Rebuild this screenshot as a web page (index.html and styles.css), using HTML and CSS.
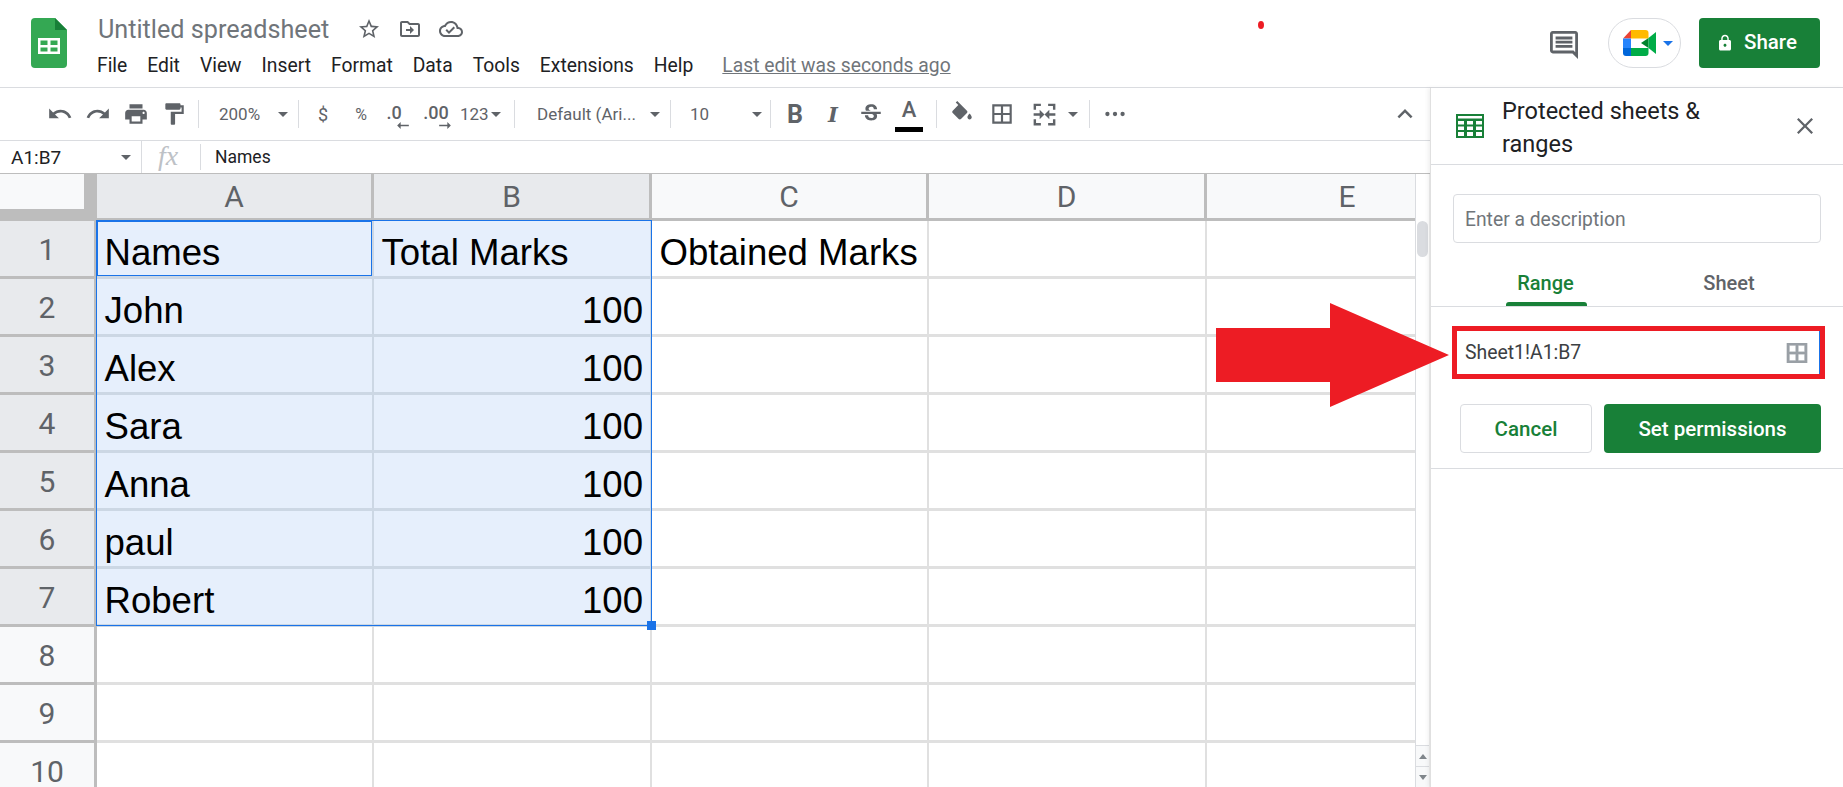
FILE: index.html
```html
<!DOCTYPE html>
<html lang="en">
<head>
    <meta charset="UTF-8">
    <meta name="viewport" content="width=device-width, initial-scale=1.0">
    <link rel="stylesheet" href="styles.css">
    <title>Untitled spreadsheet</title>
</head>
<body>

    <div class="topbar">
        <svg class="logo" viewBox="0 0 36 50">
            <path fill="#34a853" d="M4 0H24L36 12V46a4 4 0 0 1-4 4H4a4 4 0 0 1-4-4V4a4 4 0 0 1 4-4z"/>
            <path fill="#188038" d="M24 0L36 12H24z"/>
            <path fill="#fff" d="M7 20H29V36H7zM9.500 22.500V27H16.500V22.500zM19.500 22.500V27H26.500V22.500zM9.500 29.500V33.500H16.500V29.500zM19.500 29.500V33.500H26.500V29.500z" fill-rule="evenodd"/>
        </svg>

        <div class="doc-info">
            <div class="title-row">
                <span class="doc-title">Untitled spreadsheet</span>
                <svg class="title-icon" viewBox="0 0 24 24"><path d="M22 9.240l-7.190-.62L12 2 9.190 8.630 2 9.240l5.460 4.730L5.820 21 12 17.270 18.180 21l-1.630-7.030L22 9.240zM12 15.400l-3.760 2.270 1-4.280-3.320-2.880 4.380-.38L12 6.100l1.710 4.040 4.380.38-3.320 2.880 1 4.280L12 15.400z"/></svg>
                <svg class="title-icon" viewBox="0 0 24 24"><path d="M20 6h-8l-2-2H4c-1.100 0-1.990.9-1.990 2L2 18c0 1.100.9 2 2 2h16c1.100 0 2-.9 2-2V8c0-1.100-.9-2-2-2zm0 12H4V6h5.170l2 2H20v10zm-8-4H8v-2h4V9l4 4-4 4v-3z"/></svg>
                <svg class="title-icon" viewBox="0 0 24 24"><path d="M19.350 10.040C18.670 6.590 15.640 4 12 4 9.110 4 6.600 5.640 5.350 8.040 2.340 8.360 0 10.910 0 14c0 3.310 2.690 6 6 6h13c2.760 0 5-2.240 5-5 0-2.640-2.050-4.780-4.650-4.960zM19 18H6c-2.210 0-4-1.790-4-4 0-2.050 1.530-3.760 3.560-3.970l1.070-.11.5-.95C8.080 7.140 9.940 6 12 6c2.620 0 4.880 1.860 5.390 4.430l.3 1.500 1.530.11c1.560.1 2.780 1.410 2.780 2.960 0 1.650-1.350 3-3 3zm-9-3.820l-2.090-2.090L6.500 13.500 10 17l6.010-6.010-1.410-1.410z"/></svg>
            </div>
            <div class="menu-row">
                <span class="menu-item">File</span>
                <span class="menu-item">Edit</span>
                <span class="menu-item">View</span>
                <span class="menu-item">Insert</span>
                <span class="menu-item">Format</span>
                <span class="menu-item">Data</span>
                <span class="menu-item">Tools</span>
                <span class="menu-item">Extensions</span>
                <span class="menu-item">Help</span>
                <span class="last-edit">Last edit was seconds ago</span>
            </div>
        </div>

        <div class="top-actions">
            <svg class="comment-icon" viewBox="2 2 20 20"><path d="M21.990 4c0-1.100-.89-2-1.990-2H4c-1.100 0-2 .9-2 2v12c0 1.100.9 2 2 2h14l4 4-.01-18zM20 4v13.170L18.830 16H4V4h16zM6 12h12v2H6zm0-3h12v2H6zm0-3h12v2H6z"/></svg>
            <div class="meet-btn">
                <svg class="meet-icon" viewBox="0 0 33 26">
                    <path fill="#ea4335" d="M8 0V8.500H0z"/>
                    <path fill="#ffba00" d="M8 0H22.500a3 3 0 0 1 3 3V8.500H8z"/>
                    <path fill="#2684fc" d="M0 8.500H8V18H0z"/>
                    <path fill="#0066da" d="M0 18H8V26H3a3 3 0 0 1-3-3z"/>
                    <path fill="#00ac47" d="M8 18H25.500V23a3 3 0 0 1-3 3H8z"/>
                    <path fill="#00832d" d="M25.500 8L18 13l7.500 5z"/>
                    <path fill="#00ac47" d="M25.500 8L33 2V24L25.500 18z"/>
                </svg>
                <span class="meet-caret"></span>
            </div>
            <div class="share-btn">
                <svg class="lock-icon" viewBox="0 0 24 24"><path d="M18 8h-1V6c0-2.760-2.240-5-5-5S7 3.240 7 6v2H6c-1.100 0-2 .9-2 2v10c0 1.100.9 2 2 2h12c1.100 0 2-.9 2-2V10c0-1.100-.9-2-2-2zm-6 9c-1.100 0-2-.9-2-2s.9-2 2-2 2 .9 2 2-.9 2-2 2zm3.100-9H8.900V6c0-1.710 1.390-3.100 3.100-3.100 1.710 0 3.100 1.390 3.100 3.100v2z"/></svg>
                <span>Share</span>
            </div>
        </div>
        <span class="red-dot"></span>
    </div>

    <div class="workspace">
        <div class="sheet-area">

            <div class="toolbar">
                <span class="tool first"><svg viewBox="0 0 24 24"><path d="M12.500 8c-2.650 0-5.050.99-6.900 2.600L2 7v9h9l-3.620-3.620c1.390-1.160 3.160-1.880 5.120-1.880 3.540 0 6.550 2.310 7.600 5.500l2.370-.78C21.080 11.030 17.150 8 12.500 8z"/></svg></span>
                <span class="tool"><svg viewBox="0 0 24 24"><path d="M18.400 10.600C16.550 8.990 14.150 8 11.500 8c-4.650 0-8.580 3.030-9.960 7.220L3.900 16c1.050-3.190 4.050-5.500 7.600-5.500 1.950 0 3.730.72 5.120 1.880L13 16h9V7l-3.600 3.600z"/></svg></span>
                <span class="tool"><svg viewBox="0 0 24 24"><path d="M19 8H5c-1.660 0-3 1.340-3 3v6h4v4h12v-4h4v-6c0-1.660-1.340-3-3-3zm-3 11H8v-5h8v5zm3-7c-.55 0-1-.45-1-1s.45-1 1-1 1 .45 1 1-.45 1-1 1zm-1-9H6v4h12V3z"/></svg></span>
                <span class="tool"><svg viewBox="0 0 24 24"><path d="M18 4V3c0-.55-.45-1-1-1H5c-.55 0-1 .45-1 1v4c0 .55.45 1 1 1h12c.55 0 1-.45 1-1V6h1v4H9v11c0 .55.45 1 1 1h2c.55 0 1-.45 1-1v-9h8V4h-3z"/></svg></span>
                <span class="tool-sep sep-first"></span>

                <span class="select zoom-select">200%<i class="caret"></i></span>
                <span class="tool-sep"></span>

                <span class="tool-text w48">$</span>
                <span class="tool-text w28 small">%</span>
                <span class="tool-text w38 decimal">.0<svg class="dec-arrow" viewBox="0 0 10 6"><path d="M10 2.300H3V0L0 3l3 3V3.700h7z"/></svg></span>
                <span class="tool-text w46 decimal">.00<svg class="dec-arrow" viewBox="0 0 10 6"><path d="M0 2.300H7V0l3 3-3 3V3.700H0z"/></svg></span>
                <span class="select num-select">123<i class="caret"></i></span>
                <span class="tool-sep"></span>

                <span class="select font-select">Default (Ari...<i class="caret"></i></span>
                <span class="tool-sep"></span>

                <span class="select size-select">10<i class="caret"></i></span>
                <span class="tool-sep"></span>

                <span class="tool-text w48 fmt-b">B</span>
                <span class="tool-text w28 fmt-i">I</span>
                <span class="tool w48"><svg viewBox="0 0 24 24"><path d="M6.850 7.080C6.850 4.370 9.450 3 12.240 3c1.640 0 3 .49 3.900 1.280.77.65 1.460 1.730 1.460 3.240h-3.010c0-.31-.05-.59-.15-.85-.29-.86-1.200-1.280-2.250-1.280-1.860 0-2.340 1.020-2.340 1.700 0 .48.25.88.74 1.210.38.25.77.48 1.410.7H7.390c-.21-.34-.54-.89-.54-1.920zM21 12v-2H3v2h9.620c1.150.45 1.960.75 1.960 1.970 0 1-.81 1.670-2.280 1.670-1.540 0-2.930-.54-2.930-2.510H6.400c0 .55.08 1.130.24 1.580.81 2.290 3.290 3.300 5.670 3.300 2.270 0 5.300-.89 5.300-4.050 0-.3-.01-1.160-.48-1.940H21V12z"/></svg></span>
                <span class="text-color">A<i class="color-bar"></i></span>
                <span class="tool-sep sep-color"></span>

                <span class="tool fill-tool"><svg viewBox="0 0 24 24"><path d="M16.560 8.940L7.620 0 6.210 1.410l2.380 2.380-5.150 5.150c-.59.59-.59 1.540 0 2.120l5.500 5.500c.29.29.68.44 1.060.44s.77-.15 1.060-.44l5.500-5.500c.59-.58.59-1.530 0-2.120zM19 11.500s-2 2.170-2 3.500c0 1.100.9 2 2 2s2-.9 2-2c0-1.330-2-3.500-2-3.500z"/></svg></span>
                <span class="tool w42"><svg viewBox="0 0 24 24"><path d="M3 3v18h18V3H3zm8 16H5v-6h6v6zm0-8H5V5h6v6zm8 8h-6v-6h6v6zm0-8h-6V5h6v6z"/></svg></span>
                <span class="tool w42 merge-tool"><svg viewBox="0 0 24 24"><path d="M3 3h6v2H5v3H3zM15 3h6v5h-2V5h-4zM3 16h2v3h4v2H3zM19 16h2v5h-6v-2h4zM3 11h5V8l4 4-4 4v-3H3zM21 11h-5V8l-4 4 4 4v-3h5z"/></svg></span>
                <i class="caret merge-caret"></i>
                <span class="tool-sep sep-merge"></span>
                <span class="tool w50"><svg viewBox="0 0 24 24"><circle cx="5" cy="12" r="2"/><circle cx="12" cy="12" r="2"/><circle cx="19" cy="12" r="2"/></svg></span>
                <svg class="collapse-icon" viewBox="0 0 24 24"><path d="M12 8l-6 6 1.410 1.410L12 10.830l4.590 4.580L18 14z"/></svg>
            </div>

            <div class="formula-bar">
                <span class="name-box">A1:B7<i class="caret"></i></span>
                <span class="fx">fx</span>
                <span class="formula-text">Names</span>
            </div>

            <div class="grid-wrap">
                <div class="grid">
                    <div class="corner"></div>
                    <div class="col-head picked">A</div>
                    <div class="col-head picked">B</div>
                    <div class="col-head">C</div>
                    <div class="col-head">D</div>
                    <div class="col-head last">E</div>

                    <div class="row-head picked">1</div>
                    <div class="cell sel active">Names</div>
                    <div class="cell sel">Total Marks</div>
                    <div class="cell">Obtained Marks</div>
                    <div class="cell"></div>
                    <div class="cell last"></div>

                    <div class="row-head picked">2</div>
                    <div class="cell sel">John</div>
                    <div class="cell sel num">100</div>
                    <div class="cell"></div>
                    <div class="cell"></div>
                    <div class="cell last"></div>

                    <div class="row-head picked">3</div>
                    <div class="cell sel">Alex</div>
                    <div class="cell sel num">100</div>
                    <div class="cell"></div>
                    <div class="cell"></div>
                    <div class="cell last"></div>

                    <div class="row-head picked">4</div>
                    <div class="cell sel">Sara</div>
                    <div class="cell sel num">100</div>
                    <div class="cell"></div>
                    <div class="cell"></div>
                    <div class="cell last"></div>

                    <div class="row-head picked">5</div>
                    <div class="cell sel">Anna</div>
                    <div class="cell sel num">100</div>
                    <div class="cell"></div>
                    <div class="cell"></div>
                    <div class="cell last"></div>

                    <div class="row-head picked">6</div>
                    <div class="cell sel">paul</div>
                    <div class="cell sel num">100</div>
                    <div class="cell"></div>
                    <div class="cell"></div>
                    <div class="cell last"></div>

                    <div class="row-head picked">7</div>
                    <div class="cell sel">Robert</div>
                    <div class="cell sel num">100</div>
                    <div class="cell"></div>
                    <div class="cell"></div>
                    <div class="cell last"></div>

                    <div class="row-head">8</div>
                    <div class="cell"></div>
                    <div class="cell"></div>
                    <div class="cell"></div>
                    <div class="cell"></div>
                    <div class="cell last"></div>

                    <div class="row-head">9</div>
                    <div class="cell"></div>
                    <div class="cell"></div>
                    <div class="cell"></div>
                    <div class="cell"></div>
                    <div class="cell last"></div>

                    <div class="row-head">10</div>
                    <div class="cell"></div>
                    <div class="cell"></div>
                    <div class="cell"></div>
                    <div class="cell"></div>
                    <div class="cell last"></div>
                </div>

                <!-- selection frame over the cells -->
                <div class="selection"><span class="sel-handle"></span></div>

                <div class="v-scroll">
                    <div class="thumb"></div>
                    <div class="scroll-arrows">
                        <span class="arrow-btn"><i class="arrow-up"></i></span>
                        <span class="arrow-btn"><i class="arrow-down"></i></span>
                    </div>
                </div>
            </div>
        </div>

        <div class="side-panel">
            <div class="panel-head">
                <svg class="panel-icon" viewBox="0 0 28 24">
                    <path fill="#188038" fill-rule="evenodd" d="M0 0H28V24H0zM2 7V10.500H8V7zM11 7V10.500H17V7zM20 7V10.500H26V7zM2 12.500V16H8V12.500zM11 12.500V16H17V12.500zM20 12.500V16H26V12.500zM2 18V22H8V18zM11 18V22H17V18zM20 18V22H26V18zM2 2V4.500H26V2z"/>
                </svg>
                <div class="panel-title">Protected sheets &amp; ranges</div>
                <svg class="close-icon" viewBox="5 5 14 14"><path d="M19 6.410L17.590 5 12 10.590 6.410 5 5 6.410 10.590 12 5 17.590 6.410 19 12 13.410 17.590 19 19 17.590 13.410 12z"/></svg>
            </div>

            <div class="desc-wrap">
                <div class="desc-input">Enter a description</div>
            </div>

            <div class="tabs">
                <div class="tab on">Range<i class="tab-line"></i></div>
                <div class="tab off">Sheet</div>
            </div>

            <div class="range-wrap">
                <div class="range-box">
                    <span class="range-text">Sheet1!A1:B7</span>
                    <svg class="range-icon" viewBox="3 3 18 18"><path d="M3 3v18h18V3H3zm8 16H5v-6h6v6zm0-8H5V5h6v6zm8 8h-6v-6h6v6zm0-8h-6V5h6v6z"/></svg>
                </div>
            </div>

            <div class="panel-buttons">
                <div class="btn-cancel">Cancel</div>
                <div class="btn-set">Set permissions</div>
            </div>
        </div>
    </div>

    <!-- red annotation arrow pasted on top of the screenshot -->
    <svg class="big-arrow" viewBox="0 0 233 104">
        <path fill="#ed1c24" d="M0 25H114V0L233 52L114 104V79H0z"/>
    </svg>

</body>
</html>
```

FILE: styles.css
```css
* {
    box-sizing: border-box;
}

html, body {
    margin: 0;
    padding: 0;
    height: 787px;
    overflow: hidden;
}

body {
    position: relative;
    font-family: 'Roboto', sans-serif;
    background-color: #fff;
    color: #202124;
}

i {
    font-style: normal;
}

/* top bar */
.topbar {
    height: 88px;
    border-bottom: 1px solid #dadce0;
    display: flex;
    align-items: flex-start;
    padding-left: 31px;
}

.logo {
    width: 36px;
    height: 50px;
    margin-top: 18px;
    flex: none;
}

.doc-info {
    margin-left: 31px;
}

.title-row {
    display: flex;
    align-items: center;
    height: 30px;
    margin-top: 14px;
}

.doc-title {
    font-size: 25.200px;
    color: #70757a;
    width: 259px;
    white-space: nowrap;
}

.title-icon {
    width: 24px;
    height: 24px;
    fill: #5f6368;
    margin-right: 17px;
}

.menu-row {
    display: flex;
    align-items: center;
    height: 26px;
    margin-top: 8px;
    margin-left: -1px;
    font-size: 19.300px;
}

.menu-item {
    margin-right: 20px;
    color: #202124;
}

.last-edit {
    margin-left: 9px;
    color: #70757a;
    text-decoration: underline;
}

.top-actions {
    margin-left: auto;
    margin-right: 23px;
    margin-top: 18px;
    display: flex;
    align-items: center;
    height: 50px;
}

.comment-icon {
    width: 28px;
    height: 28px;
    fill: #5f6368;
    margin-right: 30px;
    margin-top: 4px;
}

.meet-btn {
    width: 73px;
    height: 50px;
    border: 1px solid #dadce0;
    border-radius: 25px;
    display: flex;
    align-items: center;
    padding-left: 14px;
    margin-right: 18px;
}

.meet-icon {
    width: 33px;
    height: 26px;
}

.meet-caret {
    margin-left: 7px;
    border-left: 5px solid transparent;
    border-right: 5px solid transparent;
    border-top: 5px solid #1a73e8;
}

.share-btn {
    width: 121px;
    height: 50px;
    background-color: #188038;
    border-radius: 4px;
    color: #fff;
    font-size: 20.500px;
    font-weight: 500;
    display: flex;
    align-items: center;
    padding-left: 17px;
    padding-bottom: 2px;
}

.lock-icon {
    width: 18px;
    height: 18px;
    fill: #fff;
    margin-right: 10px;
    margin-top: 2px;
}

.red-dot {
    position: absolute;
    left: 1258px;
    top: 21px;
    width: 6px;
    height: 8px;
    border-radius: 50%;
    background-color: #ed1c24;
}

/* main part */
.workspace {
    display: flex;
    height: 699px;
}

.sheet-area {
    width: 1430px;
    flex: none;
}

.toolbar {
    height: 53px;
    border-bottom: 1px solid #dadce0;
    display: flex;
    align-items: center;
}

.tool {
    width: 38px;
    height: 38px;
    display: flex;
    align-items: center;
    justify-content: center;
    flex: none;
}

.tool svg {
    width: 26px;
    height: 26px;
    fill: #5f6368;
}

.tool.first {
    margin-left: 41px;
}

.tool.w48 {
    width: 48px;
}

.tool.w42 {
    width: 42px;
}

.tool.w50 {
    width: 50px;
}

.merge-tool svg {
    width: 29px;
    height: 29px;
}

.tool-sep {
    width: 1px;
    height: 28px;
    background-color: #dadce0;
    flex: none;
}

.sep-first {
    margin-left: 5px;
}

.sep-color {
    margin-left: 13px;
}

.sep-merge {
    margin-left: 11px;
}

.tool-text {
    font-size: 18px;
    color: #5f6368;
    text-align: center;
    flex: none;
    position: relative;
}

.w28 {
    width: 28px;
}

.w38 {
    width: 38px;
}

.w46 {
    width: 46px;
}

.w48 {
    width: 48px;
}

.small {
    font-size: 16px;
}

.decimal {
    font-size: 18px;
    font-weight: 500;
    margin-top: -3px;
}

.dec-arrow {
    position: absolute;
    left: 50%;
    margin-left: 3px;
    top: 20px;
    width: 12px;
    height: 7px;
    fill: #5f6368;
}

.fmt-b {
    font-size: 25px;
    font-weight: 700;
}

.fmt-i {
    font-family: 'DejaVu Serif', serif;
    font-size: 21px;
    font-weight: 700;
    font-style: italic;
}

.text-color {
    width: 28px;
    height: 38px;
    flex: none;
    font-size: 22px;
    font-weight: 500;
    color: #5f6368;
    text-align: center;
    line-height: 30px;
    position: relative;
}

.color-bar {
    position: absolute;
    left: 0;
    bottom: 1px;
    width: 28px;
    height: 5px;
    background-color: #000;
}

.fill-tool {
    margin-left: 6px;
}

.select {
    font-size: 17px;
    color: #5f6368;
    display: flex;
    align-items: center;
    flex: none;
}

.caret {
    display: inline-block;
    border-left: 5.500px solid transparent;
    border-right: 5.500px solid transparent;
    border-top: 5.500px solid #5f6368;
}

.zoom-select {
    width: 99px;
    padding-left: 20px;
}

.zoom-select .caret {
    margin-left: 18px;
}

.num-select {
    width: 55px;
    padding-left: 1px;
}

.num-select .caret {
    margin-left: 2px;
}

.font-select {
    width: 155px;
    padding-left: 22px;
}

.font-select .caret {
    margin-left: 14px;
}

.size-select {
    width: 99px;
    padding-left: 19px;
}

.size-select .caret {
    margin-left: 43px;
}

.merge-caret {
    margin-left: 3px;
}

.collapse-icon {
    width: 30px;
    height: 30px;
    fill: #5f6368;
    margin-left: auto;
    margin-right: 10px;
}

/* formula bar */
.formula-bar {
    height: 32px;
    display: flex;
    align-items: center;
    font-size: 17.500px;
}

.name-box {
    width: 142px;
    height: 100%;
    padding-left: 11px;
    display: flex;
    align-items: center;
    border-right: 1px solid #dadce0;
    color: #202124;
    font-size: 19px;
}

.name-box .caret {
    margin-left: 60px;
}

.fx {
    width: 59px;
    height: 26px;
    line-height: 24px;
    padding-left: 16px;
    font-family: 'Liberation Serif', serif;
    font-style: italic;
    font-size: 28px;
    color: #bdc1c6;
    border-right: 1px solid #dadce0;
}

.formula-text {
    margin-left: 14px;
    margin-bottom: 1px;
    color: #202124;
}

/* grid */
.grid-wrap {
    position: relative;
    display: flex;
    height: 614px;
    overflow: hidden;
    border-top: 1px solid #bdbdbd;
}

.grid {
    flex: none;
    width: 1415px;
    display: grid;
    grid-template-columns: 97px 277px 278px 277px 278px 208px;
    grid-template-rows: 47px repeat(10, 58px);
}

.corner {
    background-color: #f8f9fa;
    border-right: 13px solid #bdbdbd;
    border-bottom: 12px solid #bdbdbd;
}

.col-head {
    background-color: #f8f9fa;
    border-right: 3px solid #bdbdbd;
    border-bottom: 3px solid #bdbdbd;
    color: #5f6368;
    font-size: 30px;
    display: flex;
    align-items: center;
    justify-content: center;
}

.col-head.last {
    border-right: none;
    padding-left: 72px;
}

.row-head {
    background-color: #f8f9fa;
    border-right: 3px solid #bdbdbd;
    border-bottom: 3px solid #bdbdbd;
    color: #5f6368;
    font-size: 30px;
    line-height: 28px;
    display: flex;
    align-items: center;
    justify-content: center;
    padding-top: 2px;
}

.col-head.picked,
.row-head.picked {
    background-color: #e8eaed;
}

.cell {
    font-family: 'Liberation Sans', sans-serif;
    font-size: 36.600px;
    color: #000;
    white-space: nowrap;
    padding: 0 7px 2px 7.500px;
    display: flex;
    align-items: flex-end;
    border-right: 2px solid #e0e0e0;
    border-bottom: 3px solid #e0e0e0;
}

.cell.last {
    border-right: none;
}

.cell.sel {
    background-color: #e6effc;
    border-color: #ccd7e4;
}

.cell.num {
    justify-content: flex-end;
}

.cell.active {
    box-shadow: inset 0 0 0 1px #1a73e8;
}

.selection {
    position: absolute;
    left: 96px;
    top: 46px;
    width: 556px;
    height: 406px;
    border: 1px solid #1a73e8;
    pointer-events: none;
}

.sel-handle {
    position: absolute;
    right: -5px;
    bottom: -5px;
    width: 9px;
    height: 9px;
    background-color: #1a73e8;
}

.v-scroll {
    width: 15px;
    border-left: 1px solid #dadce0;
    border-right: 1px solid #eee;
    background-color: #fff;
    display: flex;
    flex-direction: column;
    position: relative;
}

.thumb {
    margin: 47px 1px 0 1px;
    height: 36px;
    border-radius: 6px;
    background-color: #dadce0;
}

.scroll-arrows {
    margin-top: auto;
    margin-bottom: 0;
    background-color: #f8f9fa;
}

.arrow-btn {
    display: flex;
    align-items: center;
    justify-content: center;
    height: 21px;
    border-top: 1px solid #dadce0;
}

.arrow-up {
    border-left: 4px solid transparent;
    border-right: 4px solid transparent;
    border-bottom: 5px solid #80868b;
}

.arrow-down {
    border-left: 4px solid transparent;
    border-right: 4px solid transparent;
    border-top: 5px solid #80868b;
}

/* side panel */
.side-panel {
    flex: 1;
    border-left: 1px solid #e0e0e0;
    box-shadow: -2px 0 4px rgba(60, 64, 67, 0.08);
    position: relative;
}

.panel-head {
    height: 77px;
    border-bottom: 1px solid #dadce0;
    display: flex;
    align-items: center;
    padding-left: 25px;
}

.panel-icon {
    width: 28px;
    height: 24px;
    flex: none;
}

.panel-title {
    margin-left: 18px;
    margin-top: 4px;
    width: 240px;
    font-size: 23.500px;
    line-height: 33px;
    color: #202124;
}

.close-icon {
    width: 16px;
    height: 16px;
    fill: #5f6368;
    margin-left: 55px;
}

.desc-wrap {
    padding: 29px 22px 0 22px;
}

.desc-input {
    height: 49px;
    border: 1px solid #dadce0;
    border-radius: 4px;
    padding-left: 11px;
    padding-top: 1px;
    font-size: 19.300px;
    color: #70757a;
    display: flex;
    align-items: center;
}

.tabs {
    display: flex;
    height: 64px;
    border-bottom: 1px solid #dadce0;
}

.tab {
    width: 50%;
    position: relative;
    font-size: 20px;
    font-weight: 500;
    color: #5f6368;
    text-align: center;
    padding-top: 28px;
}

.tab.on {
    color: #188038;
    padding-left: 23px;
}

.tab.off {
    padding-right: 22px;
}

.tab-line {
    position: absolute;
    left: 75px;
    bottom: 0;
    width: 81px;
    height: 4px;
    border-radius: 3px 3px 0 0;
    background-color: #188038;
}

.range-wrap {
    padding: 19px 18px 0 21px;
}

.range-box {
    height: 53px;
    border: 5px solid #ed1c24;
    box-shadow: inset -1px 0 0 #1a73e8;
    display: flex;
    align-items: center;
    padding: 0 12px 0 8px;
    font-size: 19.400px;
    color: #3c4043;
}

.range-icon {
    width: 22px;
    height: 20px;
    fill: #9aa0a6;
    stroke: #9aa0a6;
    stroke-width: 0.6;
    margin-left: auto;
}

.panel-buttons {
    display: flex;
    height: 90px;
    padding: 25px 22px 14px 29px;
    border-bottom: 1px solid #dadce0;
    font-size: 20.500px;
    font-weight: 500;
}

.btn-cancel {
    width: 132px;
    height: 49px;
    border: 1px solid #dadce0;
    border-radius: 4px;
    color: #188038;
    display: flex;
    align-items: center;
    justify-content: center;
}

.btn-set {
    flex: 1;
    height: 49px;
    margin-left: 12px;
    border-radius: 4px;
    background-color: #188038;
    color: #fff;
    display: flex;
    align-items: center;
    justify-content: center;
}

.big-arrow {
    position: absolute;
    left: 1216px;
    top: 303px;
    width: 233px;
    height: 104px;
}
```
